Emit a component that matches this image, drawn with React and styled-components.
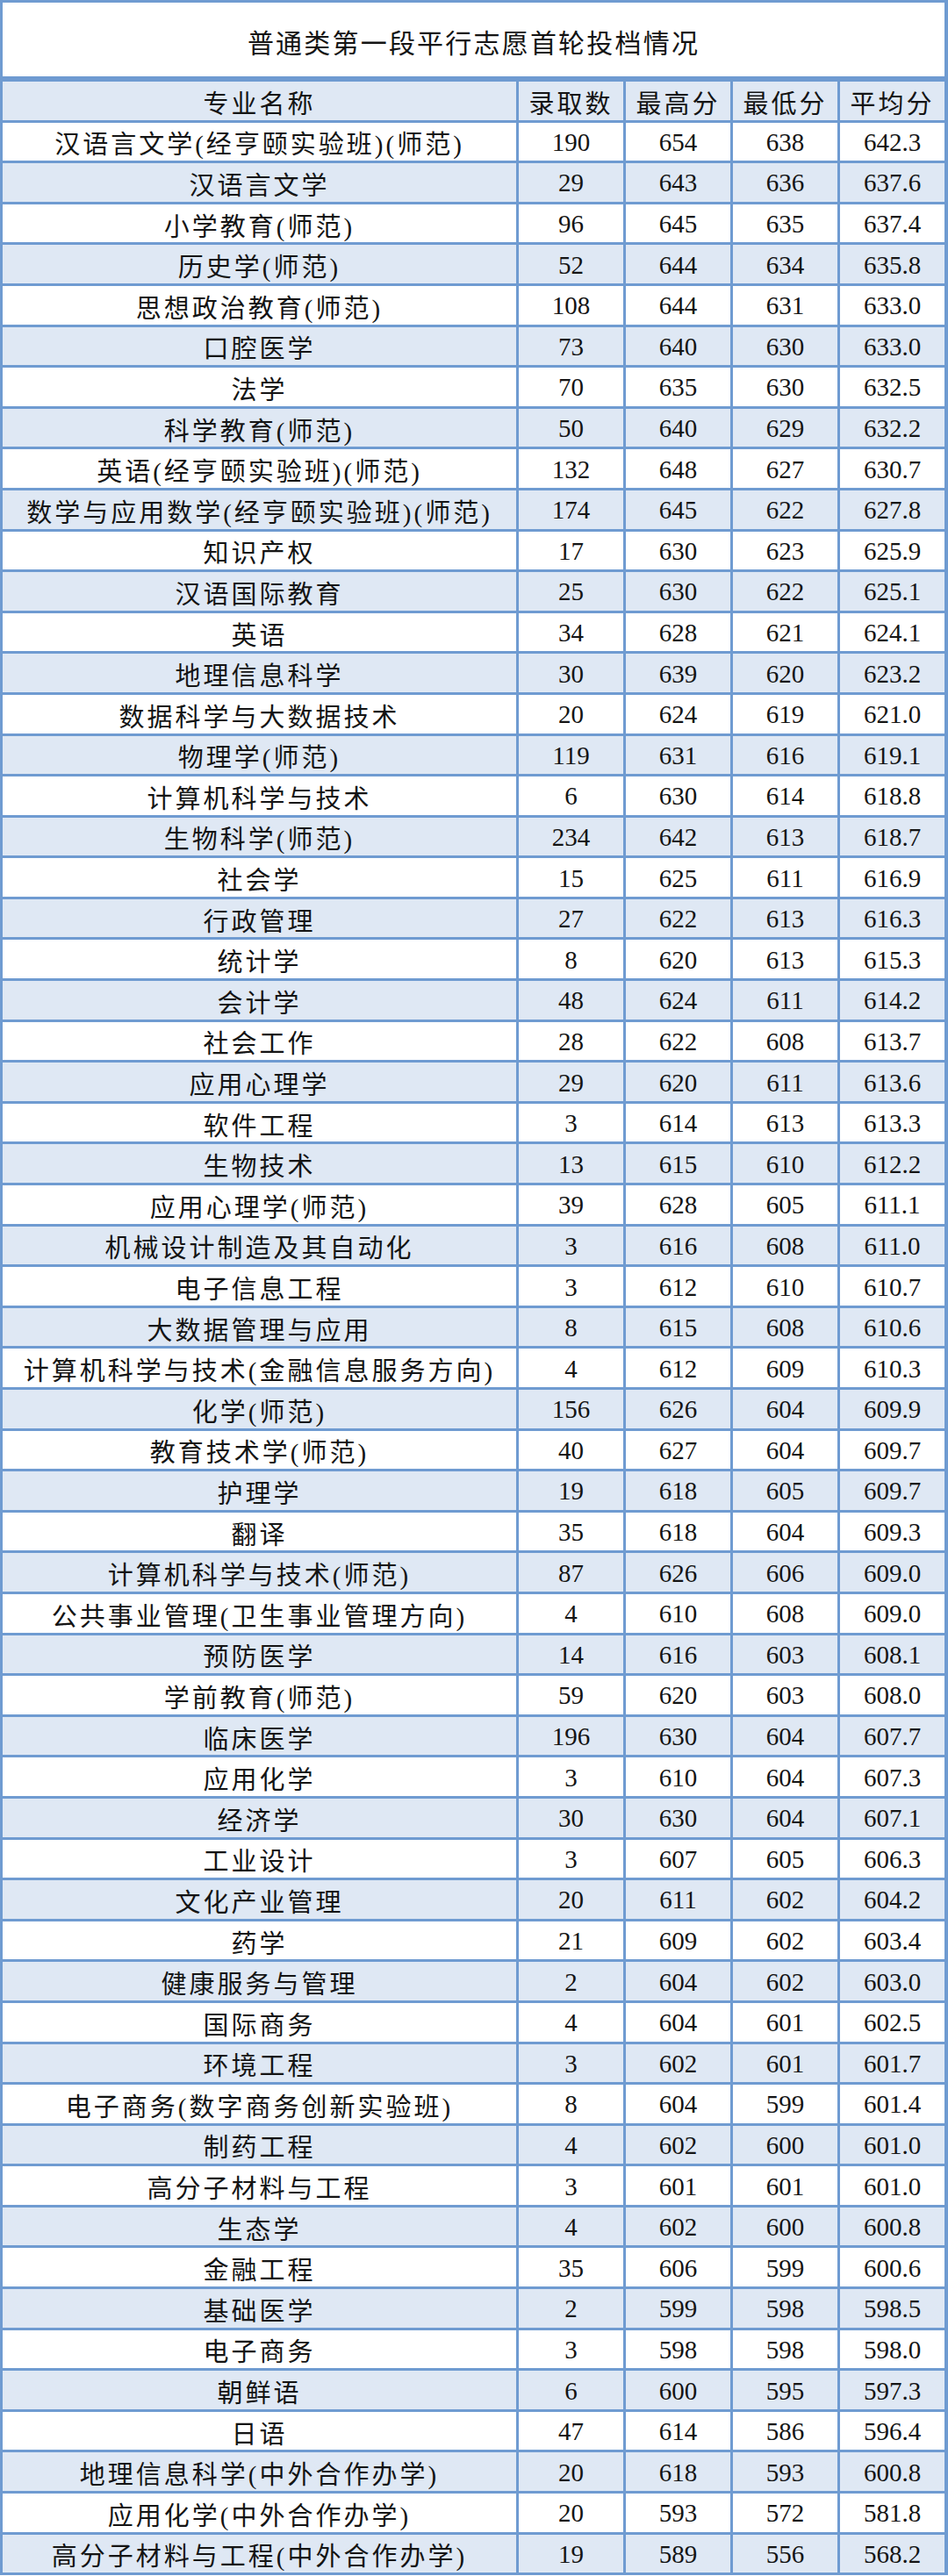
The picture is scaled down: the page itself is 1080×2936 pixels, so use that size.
import React from "react";
import styled, { createGlobalStyle } from "styled-components";

const Global = createGlobalStyle`
  html, body { margin: 0; padding: 0; background: #ffffff; }
  body { width: 1080px; }
`;

const rows = [
  ["汉语言文学(经亨颐实验班)(师范)", "190", "654", "638", "642.3"],
  ["汉语言文学", "29", "643", "636", "637.6"],
  ["小学教育(师范)", "96", "645", "635", "637.4"],
  ["历史学(师范)", "52", "644", "634", "635.8"],
  ["思想政治教育(师范)", "108", "644", "631", "633.0"],
  ["口腔医学", "73", "640", "630", "633.0"],
  ["法学", "70", "635", "630", "632.5"],
  ["科学教育(师范)", "50", "640", "629", "632.2"],
  ["英语(经亨颐实验班)(师范)", "132", "648", "627", "630.7"],
  ["数学与应用数学(经亨颐实验班)(师范)", "174", "645", "622", "627.8"],
  ["知识产权", "17", "630", "623", "625.9"],
  ["汉语国际教育", "25", "630", "622", "625.1"],
  ["英语", "34", "628", "621", "624.1"],
  ["地理信息科学", "30", "639", "620", "623.2"],
  ["数据科学与大数据技术", "20", "624", "619", "621.0"],
  ["物理学(师范)", "119", "631", "616", "619.1"],
  ["计算机科学与技术", "6", "630", "614", "618.8"],
  ["生物科学(师范)", "234", "642", "613", "618.7"],
  ["社会学", "15", "625", "611", "616.9"],
  ["行政管理", "27", "622", "613", "616.3"],
  ["统计学", "8", "620", "613", "615.3"],
  ["会计学", "48", "624", "611", "614.2"],
  ["社会工作", "28", "622", "608", "613.7"],
  ["应用心理学", "29", "620", "611", "613.6"],
  ["软件工程", "3", "614", "613", "613.3"],
  ["生物技术", "13", "615", "610", "612.2"],
  ["应用心理学(师范)", "39", "628", "605", "611.1"],
  ["机械设计制造及其自动化", "3", "616", "608", "611.0"],
  ["电子信息工程", "3", "612", "610", "610.7"],
  ["大数据管理与应用", "8", "615", "608", "610.6"],
  ["计算机科学与技术(金融信息服务方向)", "4", "612", "609", "610.3"],
  ["化学(师范)", "156", "626", "604", "609.9"],
  ["教育技术学(师范)", "40", "627", "604", "609.7"],
  ["护理学", "19", "618", "605", "609.7"],
  ["翻译", "35", "618", "604", "609.3"],
  ["计算机科学与技术(师范)", "87", "626", "606", "609.0"],
  ["公共事业管理(卫生事业管理方向)", "4", "610", "608", "609.0"],
  ["预防医学", "14", "616", "603", "608.1"],
  ["学前教育(师范)", "59", "620", "603", "608.0"],
  ["临床医学", "196", "630", "604", "607.7"],
  ["应用化学", "3", "610", "604", "607.3"],
  ["经济学", "30", "630", "604", "607.1"],
  ["工业设计", "3", "607", "605", "606.3"],
  ["文化产业管理", "20", "611", "602", "604.2"],
  ["药学", "21", "609", "602", "603.4"],
  ["健康服务与管理", "2", "604", "602", "603.0"],
  ["国际商务", "4", "604", "601", "602.5"],
  ["环境工程", "3", "602", "601", "601.7"],
  ["电子商务(数字商务创新实验班)", "8", "604", "599", "601.4"],
  ["制药工程", "4", "602", "600", "601.0"],
  ["高分子材料与工程", "3", "601", "601", "601.0"],
  ["生态学", "4", "602", "600", "600.8"],
  ["金融工程", "35", "606", "599", "600.6"],
  ["基础医学", "2", "599", "598", "598.5"],
  ["电子商务", "3", "598", "598", "598.0"],
  ["朝鲜语", "6", "600", "595", "597.3"],
  ["日语", "47", "614", "586", "596.4"],
  ["地理信息科学(中外合作办学)", "20", "618", "593", "600.8"],
  ["应用化学(中外合作办学)", "20", "593", "572", "581.8"],
  ["高分子材料与工程(中外合作办学)", "19", "589", "556", "568.2"],
];

const headers = ["专业名称", "录取数", "最高分", "最低分", "平均分"];

const Table = styled.div`
  display: flex;
  flex-direction: column;
  gap: 3px;
  width: 1080px;
  box-sizing: border-box;
  padding: 3px 4px 3px 3px;
  background: #6f9bd1;
  font-family: "Liberation Serif", "Noto Sans CJK SC", serif;
  color: #141414;
`;

const Title = styled.div`
  height: 84px;
  margin-bottom: 3px;
  background: #ffffff;
  display: flex;
  align-items: center;
  justify-content: center;
  font-size: 30px;
  letter-spacing: 2.2px;
  padding-top: 4px;
  box-sizing: border-box;
`;

const Row = styled.div`
  display: grid;
  grid-template-columns: 585px repeat(4, 119px);
  column-gap: 3px;
  height: 43.6px;
`;

const Cell = styled.div`
  background: ${(p) => (p.$alt ? "#dfe8f4" : "#ffffff")};
  display: flex;
  align-items: center;
  justify-content: center;
  font-size: ${(p) => (p.$name ? "29px" : "29px")};
  letter-spacing: ${(p) => (p.$name ? "3px" : "0")};
  padding-top: 2px;
  box-sizing: border-box;
  white-space: nowrap;
  overflow: hidden;
`;

const HeadCell = styled(Cell)`
  letter-spacing: 3px;
`;

export default function App() {
  return (
    <>
      <Global />
      <Table>
        <Title>普通类第一段平行志愿首轮投档情况</Title>
        <Row>
          {headers.map((h) => (
            <HeadCell key={h} $alt>
              {h}
            </HeadCell>
          ))}
        </Row>
        {rows.map((r, i) => (
          <Row key={i}>
            {r.map((v, j) => (
              <Cell key={j} $alt={i % 2 === 1} $name={j === 0}>
                {v}
              </Cell>
            ))}
          </Row>
        ))}
      </Table>
    </>
  );
}
